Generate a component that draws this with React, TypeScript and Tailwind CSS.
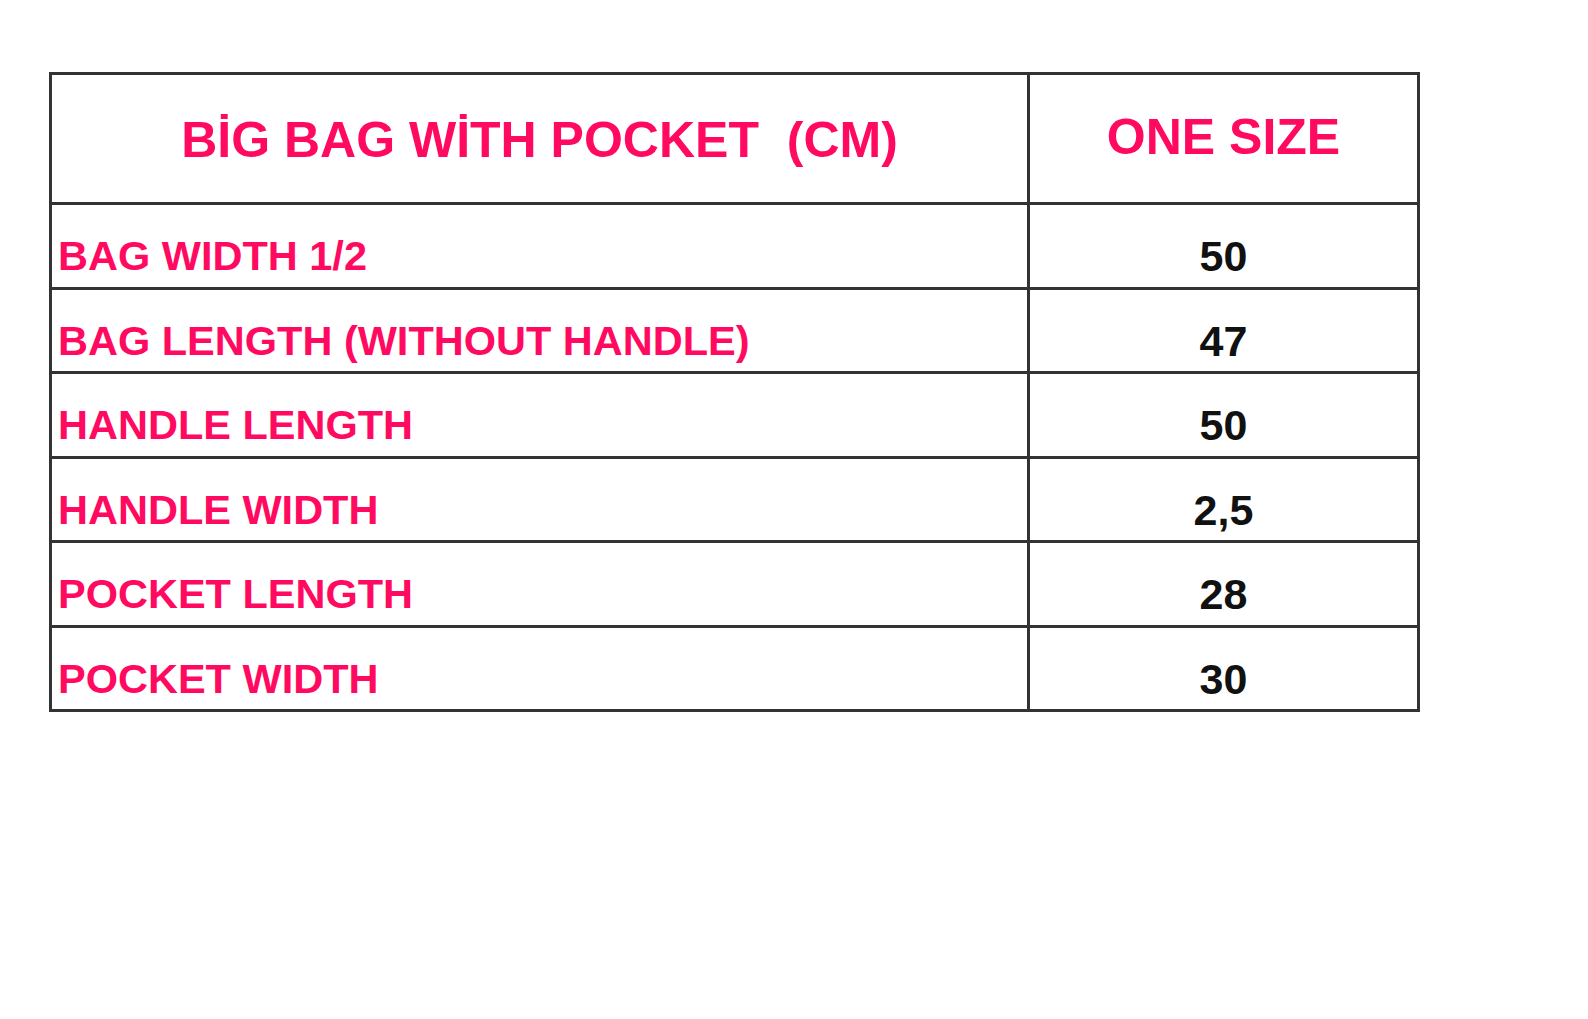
const rows = [
  { label: "BAG WIDTH 1/2", value: "50" },
  { label: "BAG LENGTH (WITHOUT HANDLE)", value: "47" },
  { label: "HANDLE LENGTH", value: "50" },
  { label: "HANDLE WIDTH", value: "2,5" },
  { label: "POCKET LENGTH", value: "28" },
  { label: "POCKET WIDTH", value: "30" },
];

export default function App() {
  return (
    <main
      className="min-h-screen w-full bg-white pt-[72px] pl-[49px]"
      style={{ fontFamily: '"Liberation Sans", Arial, sans-serif' }}
    >
      <div className="w-[1371px] border-[3px] border-[#333333] font-bold">
        {/* header */}
        <div className="flex h-[127px]">
          <div className="w-[975px] pt-[40px] text-center text-[50px] leading-none text-[#ff0a60] whitespace-pre">
            BİG BAG WİTH POCKET  (CM)
          </div>
          <div className="flex-1 border-l-[3px] border-[#333333] pt-[37px] text-center text-[50px] leading-none text-[#ff0a60]">
            ONE SIZE
          </div>
        </div>
        {rows.map((r) => (
          <div key={r.label} className="flex h-[84.5px] border-t-[3px] border-[#333333]">
            <div className="w-[975px] pl-[6px] pt-[30px] text-[41.5px] leading-none text-[#ff0a60]">
              {r.label}
            </div>
            <div className="flex-1 border-l-[3px] border-[#333333] pt-[30px] text-center text-[43px] leading-none text-[#111111]">
              {r.value}
            </div>
          </div>
        ))}
      </div>
    </main>
  );
}
